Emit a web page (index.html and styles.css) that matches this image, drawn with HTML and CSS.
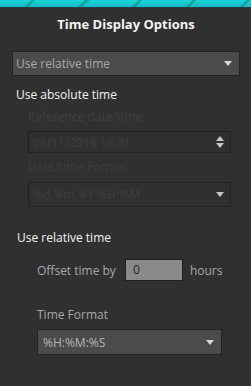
FILE: index.html
```html
<!DOCTYPE html>
<html>
<head>
<meta charset="utf-8">
<link rel="stylesheet" href="styles.css">
</head>
<body>
<div class="strip"></div>
<div class="panel">
  <h1 class="title">Time Display Options</h1>
  <div class="select mode">
    <span>Use relative time</span>
    <svg class="caret" width="8" height="5" viewBox="0 0 8 5"><path d="M0 0H8L4 5Z" fill="#d8d8d8"/></svg>
  </div>
  <div class="section abs">
    <div class="heading">Use absolute time</div>
    <div class="group disabled">
      <div class="label first">Reference date/time</div>
      <div class="field spin">
        <span>06/11/2018 16:31</span>
        <svg class="spinner" width="8" height="12" viewBox="0 0 8 12"><path d="M0 5H8L4 0Z M0 7H8L4 12Z" fill="#c4c4c4"/></svg>
      </div>
      <div class="label">Date/time Format</div>
      <div class="field sel">
        <span>%d.%m.%Y %H:%M</span>
        <svg class="caret" width="8" height="5" viewBox="0 0 8 5"><path d="M0 0H8L4 5Z" fill="#c4c4c4"/></svg>
      </div>
    </div>
  </div>
  <div class="section rel">
    <div class="heading">Use relative time</div>
    <div class="group">
      <div class="offset">
        <span class="label on">Offset time by</span>
        <span class="num">0</span>
        <span class="label on">hours</span>
      </div>
      <div class="label on fmt">Time Format</div>
      <div class="select timefmt">
        <span>%H:%M:%S</span>
        <svg class="caret" width="8" height="5" viewBox="0 0 8 5"><path d="M0 0H8L4 5Z" fill="#d8d8d8"/></svg>
      </div>
    </div>
  </div>
</div>
</body>
</html>
```
FILE: styles.css
```css
html, body {
  margin: 0;
  padding: 0;
  background: #303030;
  width: 251px;
  height: 386px;
  overflow: hidden;
  font-family: "Open Sans", "Noto Sans", sans-serif;
}
.strip {
  height: 7px;
  background:
    repeating-linear-gradient(135deg, rgba(0,120,110,0) 0 22px, rgba(0,140,120,0.55) 22px 25px, rgba(0,120,110,0) 25px 38px),
    linear-gradient(#16d6d8, #1ab8c8);
  border-bottom: 1px solid #2a3a44;
}
.panel {
  padding: 0 11px 0 12px;
}
.title {
  margin: 6px 0 0;
  height: 28px;
  font-size: 13px;
  font-weight: 700;
  color: #f4f4f4;
  text-align: center;
  line-height: 20px;
}
.select {
  display: flex;
  align-items: center;
  justify-content: space-between;
  box-sizing: border-box;
  background: #4b4b4b;
  border: 1px solid #232323;
  font-size: 12px;
  color: #a9a9a9;
  padding: 0 7px 0 3px;
}
.select.mode {
  height: 25px;
  margin-top: 9px;
}
.section .heading {
  font-size: 12px;
  color: #f2f2f2;
  line-height: 18px;
}
.abs {
  margin-top: 10px;
  padding-left: 4px;
}
.group {
  padding-left: 12px;
}
.abs .group {
  width: 203px;
}
.disabled .label {
  color: #3e3e3e;
  font-size: 12px;
  line-height: 18px;
  margin-top: 5px;
}
.disabled .label.first {
  margin-top: 4px;
}
.field {
  display: flex;
  align-items: center;
  justify-content: space-between;
  box-sizing: border-box;
  border: 1px solid #232323;
  font-size: 12px;
  color: #3e3e3e;
  padding: 0 5px 0 4px;
}
.field.spin {
  height: 22px;
  margin-top: 5px;
}
.field.sel {
  height: 25px;
  margin-top: 6px;
}
.spinner, .field .caret { margin-right: 1px; }
.rel {
  margin-top: 22px;
  padding-left: 5px;
}
.rel .group {
  padding-left: 20px;
}
.offset {
  display: flex;
  align-items: center;
  margin-top: 12px;
  height: 22px;
}
.label.on {
  color: #a8a8a8;
  font-size: 12px;
}
.num {
  box-sizing: border-box;
  width: 58px;
  height: 22px;
  margin: 0 7px 0 9px;
  background: #8a8a8a;
  border: 1px solid #1f1f1f;
  color: #1e1e1e;
  font-size: 12px;
  padding-left: 7px;
  line-height: 20px;
}
.fmt {
  display: block;
  margin-top: 25px;
  line-height: 18px;
}
.select.timefmt {
  width: 185px;
  height: 26px;
  margin-top: 5px;
  color: #b6b6b6;
  padding-left: 5px;
}
```
